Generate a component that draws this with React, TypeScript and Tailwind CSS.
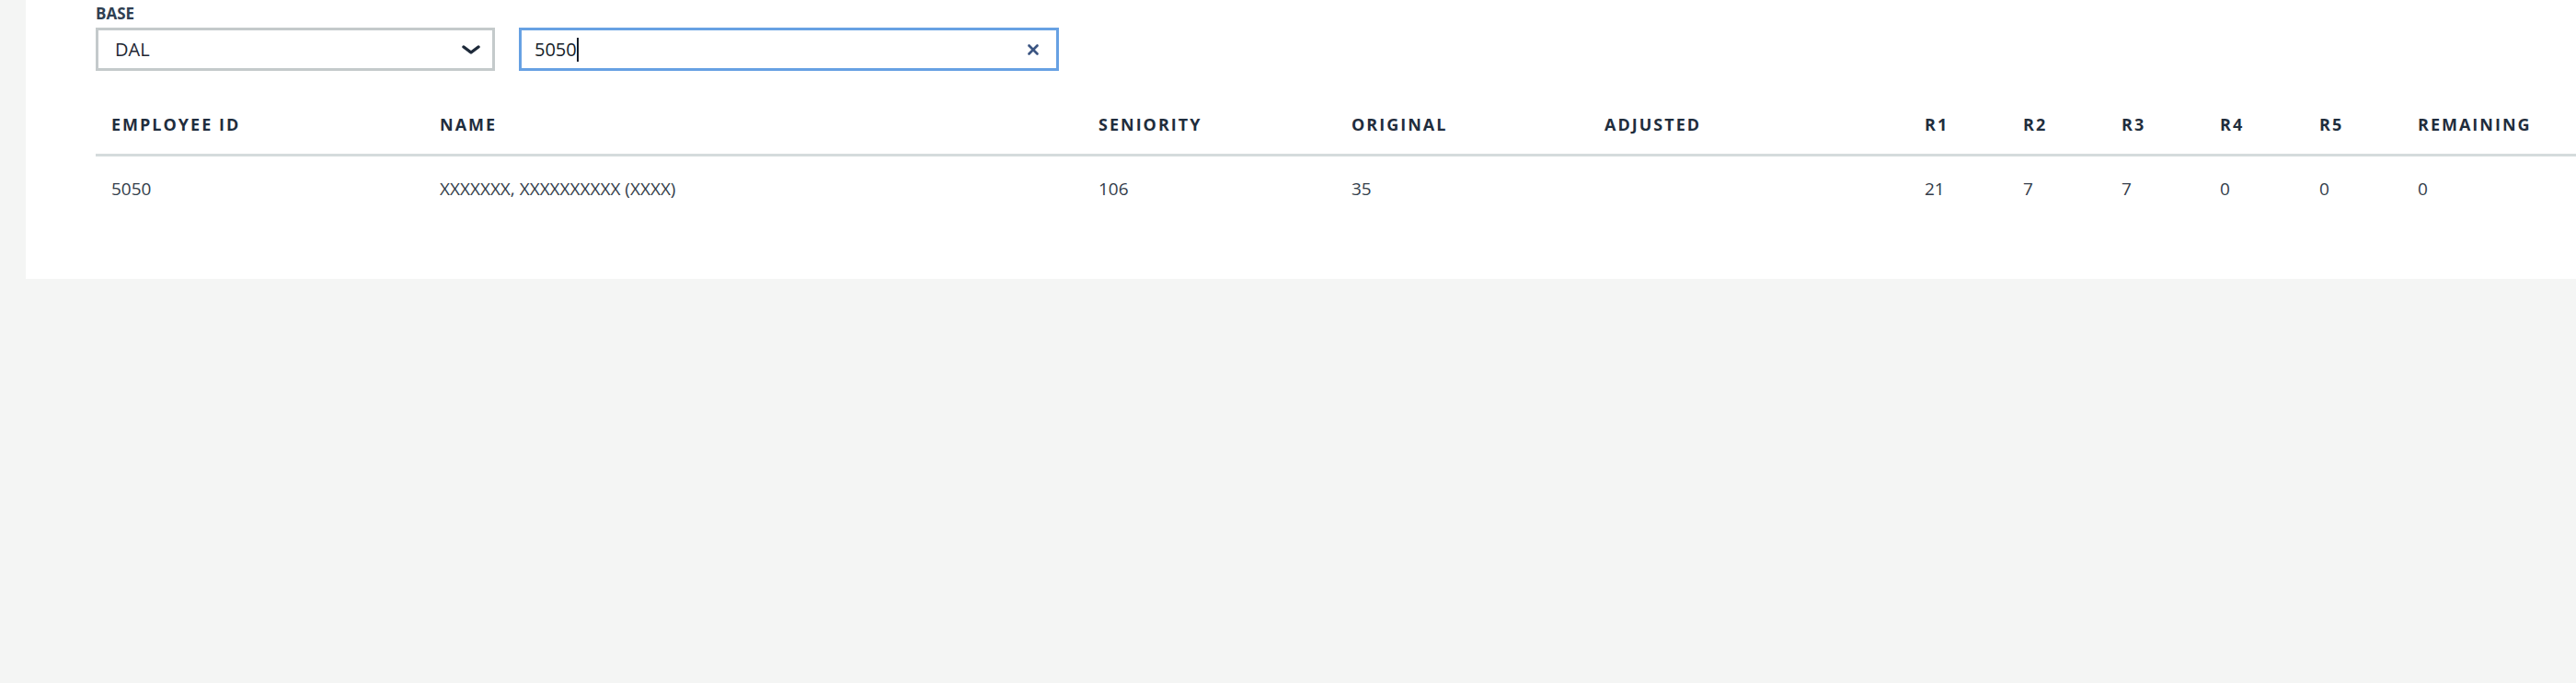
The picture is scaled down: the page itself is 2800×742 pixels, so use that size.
import { X } from 'lucide-react';

const columns = [
  { label: 'EMPLOYEE ID', value: '5050' },
  { label: 'NAME', value: 'XXXXXXX, XXXXXXXXXX (XXXX)' },
  { label: 'SENIORITY', value: '106' },
  { label: 'ORIGINAL', value: '35' },
  { label: 'ADJUSTED', value: '' },
  { label: 'R1', value: '21' },
  { label: 'R2', value: '7' },
  { label: 'R3', value: '7' },
  { label: 'R4', value: '0' },
  { label: 'R5', value: '0' },
  { label: 'REMAINING', value: '0' },
];

const gridCols =
  'grid grid-cols-[357px_716px_275px_275px_348px_107px_107px_107px_108px_107px_1fr] px-[17px]';

function Chevron() {
  return (
    <svg width="20" height="10" viewBox="0 0 20 10" className="text-[#1e2a3a]">
      <path d="M2 2 L10 8 L18 2" fill="none" stroke="currentColor" strokeWidth="3.4" strokeLinecap="round" strokeLinejoin="round" />
    </svg>
  );
}

export default function App() {
  return (
    <div
      className="min-h-screen bg-[#f4f5f4] pl-[28px]"
      style={{ fontFamily: '"Open Sans", "Liberation Sans", sans-serif' }}
    >
      <div className="bg-white pl-[76px] pb-[63px]">
        {/* Filters */}
        <div className="pt-[2px]">
          <div className="text-[17px] font-bold leading-[26px] text-[#2f3f52]">BASE</div>
          <div className="flex gap-[26px] mt-[2px]">
            <div className="w-[434px] h-[47px] border-[3px] border-[#c4cacb] flex items-center justify-between pl-[18px] pr-[13px]">
              <span className="text-[20px] text-[#1e2733]">DAL</span>
              <Chevron />
            </div>
            <div className="w-[587px] h-[47px] border-[3px] border-[#67a1e3] flex items-center justify-between pl-[14px] pr-[16px]">
              <span className="flex items-center text-[20px] text-[#141c28]">
                5050
                <span className="inline-block w-[2px] h-[26px] bg-[#141c28]" />
              </span>
              <X size={18} strokeWidth={3.5} className="text-[#3b5582]" />
            </div>
          </div>
        </div>

        {/* Table */}
        <div className="mt-[26px]">
          <div className={`${gridCols} h-[67px] items-center border-b-[3px] border-[#d5dbdc]`}>
            {columns.map((c) => (
              <div key={c.label} className="text-[18px] font-bold tracking-[2px] text-[#1f2d3d] whitespace-nowrap">
                {c.label}
              </div>
            ))}
          </div>
          <div className={`${gridCols} h-[70px] items-center`}>
            {columns.map((c) => (
              <div key={c.label} className="text-[19px] text-[#333d4a] whitespace-nowrap">
                {c.value}
              </div>
            ))}
          </div>
        </div>
      </div>
    </div>
  );
}
